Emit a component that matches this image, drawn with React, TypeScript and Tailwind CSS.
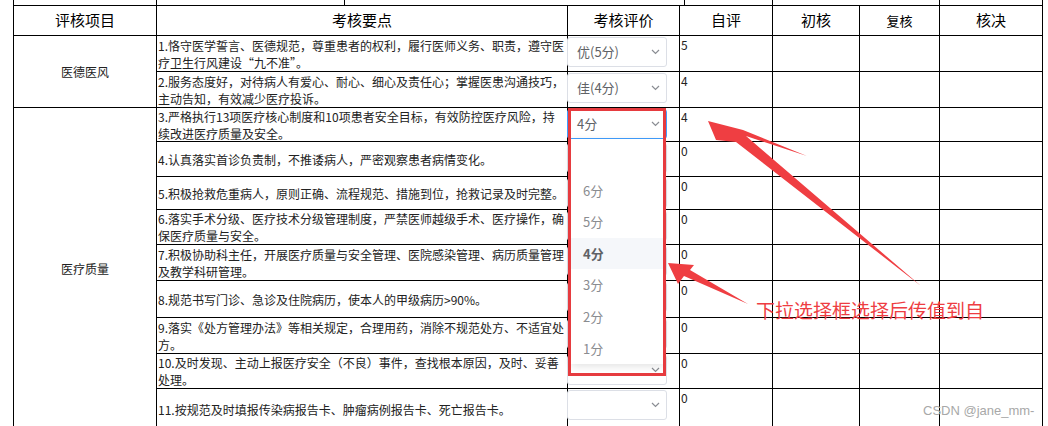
import React from "react";

type Item = { text: string[]; pick: string; self: string; focus?: boolean };

const items: Item[] = [
  {
    text: ["1.恪守医学誓言、医德规范，尊重患者的权利，履行医师义务、职责，遵守医", "疗卫生行风建设“九不准”。"],
    pick: "优(5分)",
    self: "5",
  },
  {
    text: ["2.服务态度好，对待病人有爱心、耐心、细心及责任心；掌握医患沟通技巧，", "主动告知，有效减少医疗投诉。"],
    pick: "佳(4分)",
    self: "4",
  },
  {
    text: ["3.严格执行13项医疗核心制度和10项患者安全目标，有效防控医疗风险，持", "续改进医疗质量及安全。"],
    pick: "4分",
    self: "4",
    focus: true,
  },
  { text: ["4.认真落实首诊负责制，不推诿病人，严密观察患者病情变化。"], pick: "", self: "0" },
  { text: ["5.积极抢救危重病人，原则正确、流程规范、措施到位，抢救记录及时完整。"], pick: "", self: "0" },
  {
    text: ["6.落实手术分级、医疗技术分级管理制度，严禁医师越级手术、医疗操作，确", "保医疗质量与安全。"],
    pick: "",
    self: "0",
  },
  {
    text: ["7.积极协助科主任，开展医疗质量与安全管理、医院感染管理、病历质量管理", "及教学科研管理。"],
    pick: "",
    self: "0",
  },
  { text: ["8.规范书写门诊、急诊及住院病历，使本人的甲级病历>90%。"], pick: "", self: "0" },
  {
    text: ["9.落实《处方管理办法》等相关规定，合理用药，消除不规范处方、不适宜处", "方。"],
    pick: "",
    self: "0",
  },
  {
    text: ["10.及时发现、主动上报医疗安全（不良）事件，查找根本原因，及时、妥善", "处理。"],
    pick: "",
    self: "0",
  },
  { text: ["11.按规范及时填报传染病报告卡、肿瘤病例报告卡、死亡报告卡。"], pick: "", self: "0" },
];

const options = ["", "6分", "5分", "4分", "3分", "2分", "1分"];

function Chevron() {
  return (
    <svg
      width="9"
      height="6"
      viewBox="0 0 9 6"
      className="absolute right-[6px] top-1/2 -translate-y-1/2"
    >
      <polyline points="1,1 4.5,4.5 8,1" fill="none" stroke="#8a8d93" strokeWidth="1.2" />
    </svg>
  );
}

function Pick({ value, focus }: { value: string; focus?: boolean }) {
  return (
    <div
      className={[
        "relative mt-px -ml-px h-[30px] w-[100px] rounded-[3px] border bg-white pl-[9px] text-[13px] leading-[28px] text-[#606266]",
        focus ? "border-[#409eff]" : "border-[#dcdfe6]",
      ].join(" ")}
    >
      {value}
      <Chevron />
    </div>
  );
}

function Head({ children, small }: { children: React.ReactNode; small?: boolean }) {
  return (
    <div
      className={[
        "flex items-center justify-center border-r border-b border-black text-black",
        small ? "text-[13px]" : "text-[15px]",
      ].join(" ")}
    >
      {children}
    </div>
  );
}

function Empty() {
  return <div className="border-r border-b border-black" />;
}

export default function App() {
  return (
    <div className="relative h-[426px] w-[1048px] overflow-hidden bg-white font-['Noto_Sans_CJK_SC',sans-serif] text-[#222]">
      {/* strip of the row above */}
      <div className="flex h-[5px] pl-[13px]">
        <div className="w-[143px] border-l border-black" />
        <div className="w-[188px] border-l border-black" />
        <div className="w-[340px] border-l border-black" />
        <div className="w-[88px] border-l border-black" />
        <div className="w-[167px] border-l border-black" />
        <div className="w-[104px] border-x border-black" />
      </div>

      <div className="ml-[13px] grid w-[1030px] grid-cols-[143px_411px_112px_93px_87px_80px_103px] grid-rows-[30px_36px_36px_34px_35px_33px_35px_36px_37px_36px_35px_41px] border-l border-t border-black">
        <Head>评核项目</Head>
        <Head>考核要点</Head>
        <Head>考核评价</Head>
        <Head>自评</Head>
        <Head>初核</Head>
        <Head small>复核</Head>
        <Head>核决</Head>

        {items.map((it, i) => (
          <React.Fragment key={i}>
            {i === 0 && (
              <div className="row-span-2 flex items-center justify-center border-r border-b border-black text-[12px]">
                医德医风
              </div>
            )}
            {i === 2 && (
              <div className="row-span-9 flex items-center justify-center border-r border-b border-black text-[12px]">
                医疗质量
              </div>
            )}
            <div className="flex items-center border-r border-b border-black pl-px text-[12px] leading-[17px]">
              <div>
                {it.text.map((l) => (
                  <div key={l} className="whitespace-nowrap">
                    {l}
                  </div>
                ))}
              </div>
            </div>
            <div className="border-r border-b border-black">
              <Pick value={it.pick} focus={it.focus} />
            </div>
            <div className="border-r border-b border-black pl-px pt-px text-[12px] leading-[16px]">{it.self}</div>
            <Empty />
            <Empty />
            <Empty />
          </React.Fragment>
        ))}
      </div>

      {/* open dropdown */}
      <div className="absolute left-[571px] top-[139px] h-[225px] w-[92px] bg-white pt-[4px] shadow-[0_2px_8px_rgba(0,0,0,0.12)]">
        {options.map((o, i) => (
          <div
            key={i}
            className={[
              "h-[31.6px] pl-[12px] text-[13px] leading-[31.6px]",
              o === "4分" ? "bg-[#f5f7fa] font-bold text-[#606266]" : "text-[#8a8c90]",
            ].join(" ")}
          >
            {o}
          </div>
        ))}
      </div>

      {/* annotation */}
      <div className="absolute left-[568px] top-[108px] h-[268px] w-[98px] border-[3px] border-[#e63b3f]" />

      <svg className="pointer-events-none absolute inset-0" width="1048" height="426" viewBox="0 0 1048 426">
        <polygon
          points="708,121 743,130 807,156 746,136 921,286 736,142 716,140"
          fill="#ef3e42"
        />
        <polygon points="668,263 694,265 690,270 748,304 684,276 678,284" fill="#ef3e42" />
      </svg>

      <div className="absolute left-[756px] top-[299px] text-[19px] leading-[22px] text-[#ee3d42]">
        下拉选择框选择后传值到自
      </div>

      <div className="absolute left-[923px] top-[401px] font-['Liberation_Sans',sans-serif] text-[13px] text-[#a8a8a8]">
        CSDN @jane_mm-
      </div>
    </div>
  );
}
